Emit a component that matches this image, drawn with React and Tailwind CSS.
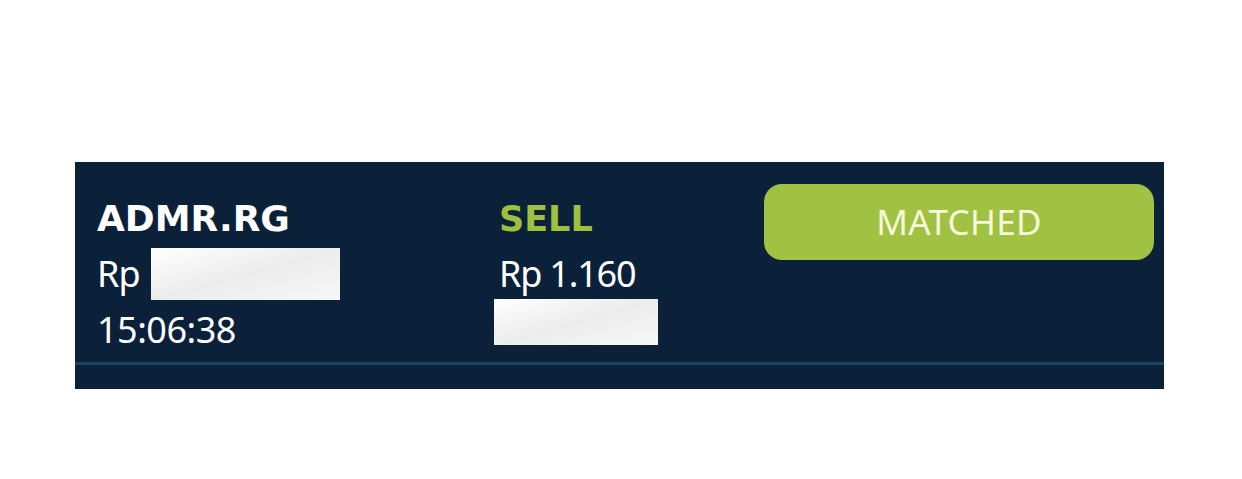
import React from 'react';

// Taped-over value (redacted in the screenshot)
const Tape = ({ className = '' }) => (
  <span
    className={`inline-block bg-gradient-to-br from-white via-[#ececec] to-[#f7f7f7] ${className}`}
  />
);

const OrderRow = ({ code, side, price, time, status }) => {
  return (
    <div className="w-[1089px] bg-[#0b2039] font-['Noto_Sans',sans-serif] text-white">
      <div className="flex h-[200px] pl-[22px] pr-[10px]">
        {/* Stock + amount + time */}
        <div className="w-[402px] pt-[28px] text-[36px] leading-[56px]">
          <div className="pt-[2px] font-['DejaVu_Sans',sans-serif] text-[36px] font-bold leading-[54px]">
            {code}
          </div>
          <div className="flex items-center">
            <span className="tracking-[-1px]">Rp</span>
            <Tape className="ml-[11px] h-[52px] w-[189px]" />
          </div>
          <div className="tracking-[-0.5px]">{time}</div>
        </div>

        {/* Side + price */}
        <div className="w-[265px] pt-[28px] text-[36px] leading-[56px]">
          <div className="pt-[2px] font-['DejaVu_Sans',sans-serif] text-[35px] font-bold leading-[54px] text-[#9fc03f]">
            {side}
          </div>
          <div className="tracking-[-1.2px]">Rp {price}</div>
          <Tape className="-ml-[5px] mt-[-3px] h-[46px] w-[164px]" />
        </div>

        {/* Status pill */}
        <div className="flex-1 pt-[22px]">
          <div className="flex h-[76px] items-center justify-center rounded-[18px] bg-[#a1c142] text-[35px] text-[#f6f9dc] tracking-[0.3px]">
            {status}
          </div>
        </div>
      </div>
      <div className="h-[3px] bg-[#1f4266]" />
      <div className="h-[24px]" />
    </div>
  );
};

export default function App() {
  return (
    <div className="h-[479px] w-[1242px] bg-white pl-[75px] pt-[162px]">
      <OrderRow code="ADMR.RG" side="SELL" price="1.160" time="15:06:38" status="MATCHED" />
    </div>
  );
}
